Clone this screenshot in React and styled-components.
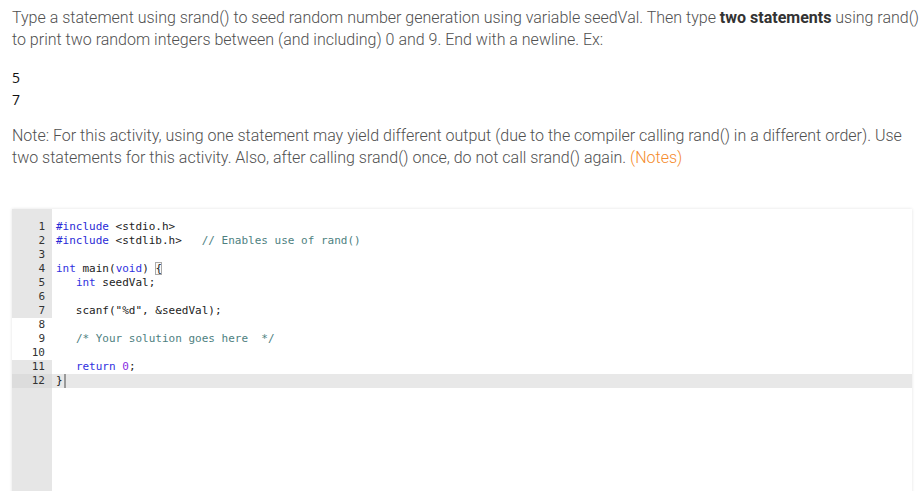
import styled, { createGlobalStyle } from "styled-components";

const GlobalStyle = createGlobalStyle`
  body {
    margin: 0;
    background: #ffffff;
  }
`;

const lines = [
  { ro: true, parts: [["pre", "#include"], ["txt", " <stdio.h>"]] },
  { ro: true, parts: [["pre", "#include"], ["txt", " <stdlib.h>   "], ["com", "// Enables use of rand()"]] },
  { ro: true, parts: [] },
  { ro: true, parts: [["kw", "int"], ["txt", " main("], ["kw", "void"], ["txt", ") "], ["brace", "{"]] },
  { ro: true, parts: [["txt", "   "], ["kw", "int"], ["txt", " seedVal;"]] },
  { ro: true, parts: [] },
  { ro: true, parts: [["txt", "   scanf("], ["str", "\"%d\""], ["txt", ", &seedVal);"]] },
  { ro: false, parts: [] },
  { ro: false, parts: [["txt", "   "], ["com", "/* Your solution goes here  */"]] },
  { ro: false, parts: [] },
  { ro: true, parts: [["txt", "   "], ["kw", "return"], ["txt", " "], ["num", "0"], ["txt", ";"]] },
  { ro: true, active: true, parts: [["txt", "}"], ["cursor", ""]] },
];

const App = () => {
  return (
    <Page>
      <GlobalStyle />
      <Prompt>
        Type a statement using srand() to seed random number generation using variable seedVal. Then type{" "}
        <strong>two statements</strong> using rand() to print two random integers between (and including) 0 and 9. End
        with a newline. Ex:
      </Prompt>
      <Example>
        5
        <br />7
      </Example>
      <Note>
        Note: For this activity, using one statement may yield different output (due to the compiler calling rand() in
        a different order). Use two statements for this activity. Also, after calling srand() once, do not call srand()
        again. <NotesLink>(Notes)</NotesLink>
      </Note>
      <Editor>
        {lines.map((line, i) => (
          <Row key={i} $active={line.active}>
            <Gutter $readOnly={line.ro} $active={line.active}>
              {i + 1}
            </Gutter>
            <Code>
              {line.parts.map(([kind, text], j) => (
                <Token key={j} $kind={kind}>
                  {text}
                </Token>
              ))}
            </Code>
          </Row>
        ))}
        <Filler>
          <Gutter $readOnly />
        </Filler>
      </Editor>
    </Page>
  );
};

export default App;

const Page = styled.div`
  padding: 7px 12px 0 12px;
  width: 900px;
  height: 484px;
  overflow: hidden;
`;

const Prompt = styled.p`
  margin: 0;
  width: 910px;
  font-family: Roboto, "Liberation Sans", sans-serif;
  font-weight: 300;
  font-size: 16px;
  line-height: 22px;
  color: #505050;

  strong {
    font-weight: 700;
    color: #333;
  }
`;

const Example = styled.div`
  margin-top: 16px;
  font-family: "Open Sans", "Noto Sans", sans-serif;
  font-size: 14px;
  line-height: 22px;
  color: #111;
`;

const Note = styled.p`
  margin: 14px 0 0 0;
  width: 906px;
  font-family: Roboto, "Liberation Sans", sans-serif;
  font-weight: 300;
  font-size: 16px;
  line-height: 22px;
  color: #505050;
`;

const NotesLink = styled.span`
  color: #f58b2c;
`;

const Editor = styled.div`
  margin-top: 40px;
  padding-top: 11px;
  box-shadow: 0 0 3px rgba(0, 0, 0, 0.12);
  display: flex;
  flex-direction: column;
  height: 300px;
  background-color: #fff;
  background-image: linear-gradient(to right, #e6e6e6 40px, transparent 40px);
  background-size: 40px 11px;
  background-repeat: no-repeat;
`;

const Row = styled.div`
  display: flex;
  height: 14px;
  background: ${(p) => (p.$active ? "#e8e8e8" : "transparent")};
`;

const Gutter = styled.div`
  width: 40px;
  flex-shrink: 0;
  box-sizing: border-box;
  padding-right: 7px;
  text-align: right;
  font-family: "DejaVu Sans Mono", "Liberation Mono", monospace;
  font-size: 11px;
  line-height: 14px;
  color: #333;
  background: ${(p) => (p.$active ? "#dcdcdc" : p.$readOnly ? "#e6e6e6" : "#fff")};
`;

const Code = styled.pre`
  margin: 0;
  padding-left: 4px;
  font-family: "DejaVu Sans Mono", "Liberation Mono", monospace;
  font-size: 11px;
  line-height: 14px;
  color: #222;
  white-space: pre;
`;

const tokenColors = {
  pre: "#2a2ad6",
  kw: "#3030e0",
  txt: "#222",
  com: "#4e7f7f",
  str: "#222",
  num: "#8a2be2",
  brace: "#222",
};

const Token = styled.span`
  color: ${(p) => tokenColors[p.$kind] || "#222"};
  ${(p) =>
    p.$kind === "brace" &&
    `
    outline: 1px solid #aaa;
    outline-offset: -1px;
    background: #fafafa;
  `}
  ${(p) =>
    p.$kind === "cursor" &&
    `
    display: inline-block;
    width: 2px;
    height: 14px;
    margin-left: 1px;
    vertical-align: top;
    background: #9a9a9a;
  `}
`;

const Filler = styled.div`
  flex: 1;
  display: flex;
`;
